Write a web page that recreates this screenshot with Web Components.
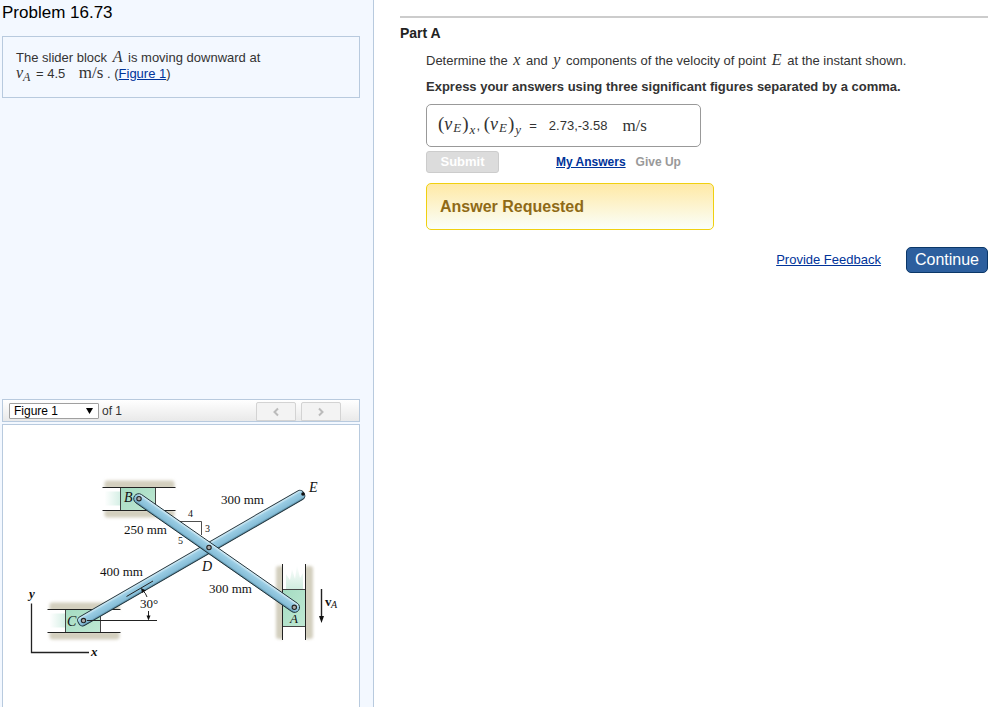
<!DOCTYPE html>
<html lang="en">
<head>
<meta charset="utf-8">
<meta name="viewport" content="width=device-width, initial-scale=1">
<title>Problem 16.73</title>
<style>
  body {
    margin: 0;
    font: 13px/16px "Liberation Sans", Arial, sans-serif;
    color: #333;
    background: #fff;
  }
</style>
</head>
<body>
<problem-page>
  <problem-intro slot="side" heading="Problem 16.73">
    The slider block <math-term>A</math-term> is moving downward at<br>
    <math-term sub="A">v</math-term> = 4.5 &nbsp;<math-term upright>m/s</math-term> . (<a href="#figure">Figure 1</a>)
  </problem-intro>
  <figure-viewer slot="side" id="figure" count="1">
    <linkage-diagram></linkage-diagram>
  </figure-viewer>
  <problem-part heading="Part A">
    <span slot="question">Determine the <math-term>x</math-term> and <math-term>y</math-term> components of the velocity of point <math-term>E</math-term> at the instant shown.</span>
    <span slot="instructions">Express your answers using three significant figures separated by a comma.</span>
    <answer-box value="2.73,-3.58" units="m/s"></answer-box>
    <answer-actions></answer-actions>
    <answer-status>Answer Requested</answer-status>
  </problem-part>
  <page-footer></page-footer>
</problem-page>

<script>
const LINK_STYLE = /* css */ `
  a { color: #039; text-decoration: underline; }
`;

class BaseElement extends HTMLElement {
  constructor() {
    super();
    this.attachShadow({ mode: 'open' });
  }

  connectedCallback() {
    this.shadowRoot.innerHTML = this.render();
  }

  attr(name) {
    return this.getAttribute(name) || '';
  }
}

class ProblemPage extends BaseElement {
  render() {
    return /* html */ `
      <style>
        :host {
          display: grid;
          grid-template-columns: minmax(0, 374fr) minmax(0, 629fr);
          min-height: 100vh;
        }
        aside {
          display: flex;
          flex-direction: column;
          box-sizing: border-box;
          padding: 0 13px 0 2px;
          background: #f3f8ff;
          border-right: 1px solid #b8cade;
        }
        main { padding: 16px 15px 16px 26px; }
      </style>
      <aside><slot name="side"></slot></aside>
      <main><slot></slot></main>
    `;
  }
}

class ProblemIntro extends BaseElement {
  render() {
    return /* html */ `
      <style>
        :host { display: block; flex: 1; }
        h1 {
          margin: 0 0 10px;
          font-size: 17px;
          line-height: 26px;
          font-weight: normal;
          color: #000;
        }
        .box {
          padding: 13px 13px 15px;
          border: 1px solid #b8cade;
        }
        ::slotted(a) { color: #039; }
      </style>
      <h1>${this.attr('heading')}</h1>
      <div class="box"><slot></slot></div>
    `;
  }
}

// One symbol with an optional subscript, e.g. <math-term sub="A">v</math-term>
class MathTerm extends BaseElement {
  render() {
    const sub = this.attr('sub');
    return /* html */ `
      <style>
        :host {
          display: inline;
          padding-right: 2px;
          font-family: "Liberation Serif", "Times New Roman", serif;
          font-size: 16px;
          font-style: italic;
          line-height: 0;
        }
        :host([upright]) {
          padding-right: 0;
          font-size: 17px;
          font-style: normal;
        }
        :host(:not([sub])) { padding-left: 2px; }
        sub { font-size: 12px; line-height: 0; vertical-align: -3px; }
      </style><slot></slot>${sub ? `<sub>${sub}</sub>` : ''}`;
  }
}

class FigureViewer extends BaseElement {
  render() {
    const count = this.attr('count');
    return /* html */ `
      <style>
        :host { display: block; }
        .bar {
          display: flex;
          align-items: center;
          height: 21px;
          margin-bottom: 2px;
          padding: 0 18px 0 6px;
          font-size: 12px;
          border: 1px solid #b8cade;
          background: linear-gradient(#fff, #e9e9e9);
        }
        .picker { display: grid; margin-right: 3px; }
        .picker > * { grid-area: 1 / 1; }
        select {
          appearance: none;
          width: 90px;
          height: 16px;
          padding: 0 4px;
          font: 12px/14px "Liberation Sans", Arial, sans-serif;
          color: #000;
          background: #fff;
          border: 1px solid #a0a0a0;
          border-radius: 1px;
        }
        .picker svg {
          place-self: center end;
          margin-right: 6px;
          pointer-events: none;
        }
        label { flex: 1; }
        .nav { display: flex; gap: 5px; align-self: flex-end; }
        button {
          display: grid;
          place-items: center;
          width: 40px;
          height: 19px;
          padding: 0;
          background: #f3f3f3;
          border: 1px solid #d3d3d3;
          border-radius: 2px 2px 0 0;
        }
        button svg { fill: none; stroke: #bbb; stroke-width: 2; }
        .panel {
          border: 1px solid #b8cade;
          border-bottom: 0;
          background: #fff;
        }
      </style>
      <div class="bar">
        <span class="picker">
          <select id="pick" aria-label="Figure"><option>Figure 1</option></select>
          <svg width="7" height="7" viewBox="0 0 7 7"><path d="M0 1H7L3.5 7Z"/></svg>
        </span>
        <label for="pick">of ${count}</label>
        <span class="nav">
          <button type="button" aria-label="Previous figure" disabled>
            <svg width="8" height="10" viewBox="0 0 8 10"><path d="M6 1.5L2.5 5L6 8.5"/></svg>
          </button>
          <button type="button" aria-label="Next figure" disabled>
            <svg width="8" height="10" viewBox="0 0 8 10"><path d="M2 1.5L5.500 5L2 8.5"/></svg>
          </button>
        </span>
      </div>
      <div class="panel"><slot></slot></div>
    `;
  }
}

class LinkageDiagram extends BaseElement {
  // horizontal guide with its block; x, y is the left end of the upper rail
  guide(x, y) {
    return `
      <rect x="${x + 2}" y="${y - 7}" width="70" height="9" rx="3" fill="#d3cfbe" filter="url(#soft)"/>
      <rect x="${x + 2}" y="${y + 22}" width="70" height="8" rx="3" fill="#d3cfbe" filter="url(#soft)"/>
      <rect x="${x}" y="${y}" width="73" height="23" fill="#fff"/>
      <rect x="${x + 2}" y="${y + 4}" width="16" height="14" fill="url(#trailH)"/>
      <rect x="${x + 18}" y="${y}" width="35" height="23" fill="url(#block)" stroke="#444"/>
      <path d="M${x} ${y}h73M${x} ${y + 23}h73" stroke="#222"/>`;
  }

  pin(x, y) {
    return `<circle cx="${x}" cy="${y}" r="2.2" fill="#aaa" stroke="#222" stroke-width="1.1"/>`;
  }

  render() {
    return /* html */ `
      <style>
        :host { display: block; }
        svg {
          display: block;
          width: 100%;
          font-family: "Liberation Serif", "Times New Roman", serif;
          font-size: 13px;
          fill: #111;
        }
        .small { font-size: 10px; }
        .i { font-style: italic; }
        .point { font-size: 14px; font-style: italic; }
        .line { fill: none; stroke: #222; }
      </style>
      <svg viewBox="0 0 356 282" role="img" aria-label="Crossed links CDE and BDA with slider blocks A, B and C">
        <defs>
          <filter id="soft" x="-30%" y="-50%" width="160%" height="200%"><feGaussianBlur stdDeviation="1.6"/></filter>
          <linearGradient id="link" x2="0" y2="1">
            <stop offset="0" stop-color="#e4f4fb"/>
            <stop offset=".3" stop-color="#9acde4"/>
            <stop offset=".8" stop-color="#86bdd7"/>
            <stop offset="1" stop-color="#4b7c92"/>
          </linearGradient>
          <linearGradient id="block" x2="1" y2="1">
            <stop offset="0" stop-color="#a5dcc2"/>
            <stop offset="1" stop-color="#bfe8d3"/>
          </linearGradient>
          <linearGradient id="trailH">
            <stop offset="0" stop-color="#fff"/><stop offset="1" stop-color="#d5efe5"/>
          </linearGradient>
          <linearGradient id="trailV" x2="0" y2="1">
            <stop offset="0" stop-color="#fff"/><stop offset="1" stop-color="#d0ecdf"/>
          </linearGradient>
        </defs>

        ${this.guide(99.5, 62.5)}
        ${this.guide(44.5, 184.5)}

        <rect x="273" y="141" width="9" height="73" rx="3" fill="#d3cfbe" filter="url(#soft)"/>
        <rect x="301" y="141" width="9" height="73" rx="3" fill="#d3cfbe" filter="url(#soft)"/>
        <rect x="279.500" y="138" width="23" height="78" fill="#fff"/>
        <path d="M283 164V149L287 155L289 144L292 154L294 140L297 153L300 148V164Z" fill="url(#trailV)"/>
        <rect x="279.500" y="164.500" width="23" height="37" fill="url(#block)" stroke="#444"/>
        <path class="line" d="M279.500 139V215M302.500 139V215"/>

        <g transform="translate(80 195.600) rotate(-30)">
          <rect x="-5" y="-5" width="260" height="10" rx="4" fill="url(#link)" stroke="#1d3038" stroke-width=".9"/>
        </g>
        <g transform="translate(135.700 73.700) rotate(34.900)">
          <rect x="-5" y="-5" width="200" height="10" rx="5" fill="url(#link)" stroke="#1d3038" stroke-width=".9"/>
        </g>
        ${this.pin(80.5, 195.6)}
        ${this.pin(136, 73.7)}
        ${this.pin(206, 122.5)}
        ${this.pin(291.3, 182.3)}
        <circle cx="300" cy="69" r="1.800"/>

        <path class="line" d="M177 96.500H198.500V110" stroke-width=".8"/>
        <path class="line" d="M84 195.500H154M123.500 171.500L150 156"/>
        <path class="line" d="M139 165Q143 168 144 172M145.500 186V192"/>
        <path d="M138 163L143 165.500L139 168Z"/>
        <path d="M143.500 190.500H147.500L145.500 195.500Z"/>
        <path class="line" d="M28.500 178.500V227.500H86" stroke-width="1.3"/>
        <path class="line" d="M318.500 164V193" stroke-width="1.4"/>
        <path d="M316 191H321L318.500 198Z"/>

        <text x="121" y="77" class="point">B</text>
        <text x="64" y="201" class="point">C</text>
        <text x="287" y="198" class="i">A</text>
        <text x="199" y="146" class="point">D</text>
        <text x="306" y="67" class="point">E</text>
        <text x="218" y="79">300 mm</text>
        <text x="121" y="109">250 mm</text>
        <text x="97" y="151">400 mm</text>
        <text x="206" y="168">300 mm</text>
        <text x="137" y="183">30°</text>
        <text x="185" y="92" class="small">4</text>
        <text x="202" y="107" class="small">3</text>
        <text x="175" y="119" class="small">5</text>
        <text x="26" y="173" class="i" font-weight="bold">y</text>
        <text x="88" y="231" class="i" font-weight="bold">x</text>
        <text x="322" y="181" font-weight="bold">v</text>
        <text x="328" y="183" class="small i">A</text>
      </svg>
    `;
  }
}

class ProblemPart extends BaseElement {
  render() {
    return /* html */ `
      <style>
        :host { display: block; border-top: 2px solid #ccc; }
        h2 { margin: 7px 0 12px; font-size: 14px; line-height: 16px; color: #222; }
        .body { padding-left: 26px; }
        p { margin: 0 0 10px; }
        .instructions { font-weight: bold; margin-bottom: 9px; }
      </style>
      <h2>${this.attr('heading')}</h2>
      <div class="body">
        <p><slot name="question"></slot></p>
        <p class="instructions"><slot name="instructions"></slot></p>
        <slot></slot>
      </div>
    `;
  }
}

class AnswerBox extends BaseElement {
  component(axis) {
    return `<span class="paren">(</span><i>v</i><sub>E</sub><span class="paren">)</span><sub class="axis">${axis}</sub>`;
  }

  render() {
    return /* html */ `
      <style>
        :host {
          display: flex;
          align-items: center;
          box-sizing: border-box;
          width: 275px;
          height: 43px;
          max-width: 100%;
          padding: 0 11px;
          border: 1px solid #999;
          border-radius: 5px;
        }
        .label {
          margin-right: 12px;
          padding-bottom: 2px;
          white-space: nowrap;
          font-family: "Liberation Serif", "Times New Roman", serif;
          font-size: 18px;
        }
        .paren { font-size: 19px; }
        sub {
          margin: 0 1px;
          font-size: 13px;
          font-style: italic;
          line-height: 0;
          vertical-align: -2px;
        }
        .axis { vertical-align: -4px; }
        .eq { font: 13px "Liberation Sans", Arial, sans-serif; }
        .value { margin-right: 13px; }
      </style>
      <span class="label">${this.component('x')}<span class="eq">, </span>${this.component('y')}<span class="eq"> &nbsp;=</span></span>
      <span class="value">${this.attr('value')}</span>
      <math-term upright>${this.attr('units')}</math-term>
    `;
  }
}

class AnswerActions extends BaseElement {
  render() {
    return /* html */ `
      <style>
        ${LINK_STYLE}
        :host {
          display: flex;
          align-items: center;
          gap: 10px;
          margin: 4px 0 10px;
          font-size: 12px;
          font-weight: bold;
        }
        button {
          width: 73px;
          height: 22px;
          margin-right: 47px;
          padding: 0;
          font: bold 13px/18px "Liberation Sans", Arial, sans-serif;
          color: #fff;
          background: #dcdcdc;
          border: 1px solid #ccc;
          border-radius: 3px;
        }
        .give-up { color: #999; text-decoration: none; }
      </style>
      <button type="button" disabled>Submit</button>
      <a href="#answers">My Answers</a>
      <a class="give-up" href="#give-up">Give Up</a>
    `;
  }
}

class AnswerStatus extends BaseElement {
  render() {
    return /* html */ `
      <style>
        :host {
          display: block;
          box-sizing: border-box;
          width: 288px;
          max-width: 100%;
          padding: 13px 13px 12px;
          font-size: 16px;
          line-height: 20px;
          font-weight: bold;
          color: #8f6a16;
          background: linear-gradient(#ffe9a6, #fafffa);
          border: 1px solid #f0d010;
          border-radius: 5px;
        }
      </style>
      <slot></slot>
    `;
  }
}

class PageFooter extends BaseElement {
  render() {
    return /* html */ `
      <style>
        ${LINK_STYLE}
        :host {
          display: flex;
          justify-content: flex-end;
          align-items: center;
          gap: 25px;
          margin-top: 17px;
        }
        button {
          height: 26px;
          padding: 0 8px;
          font: 16px/22px "Liberation Sans", Arial, sans-serif;
          color: #fff;
          background: #2d5f9e;
          border: 1px solid #0b3768;
          border-radius: 5px;
        }
      </style>
      <a href="#feedback">Provide Feedback</a>
      <button type="button">Continue</button>
    `;
  }
}

customElements.define('problem-page', ProblemPage);
customElements.define('problem-intro', ProblemIntro);
customElements.define('math-term', MathTerm);
customElements.define('figure-viewer', FigureViewer);
customElements.define('linkage-diagram', LinkageDiagram);
customElements.define('problem-part', ProblemPart);
customElements.define('answer-box', AnswerBox);
customElements.define('answer-actions', AnswerActions);
customElements.define('answer-status', AnswerStatus);
customElements.define('page-footer', PageFooter);
</script>
</body>
</html>
